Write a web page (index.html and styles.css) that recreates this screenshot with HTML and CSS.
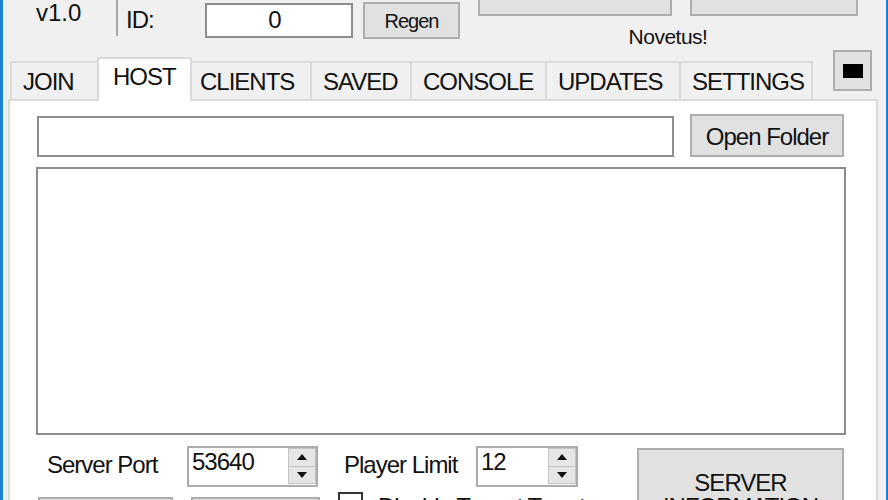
FILE: index.html
```html
<!DOCTYPE html>
<html>
<head>
<meta charset="utf-8">
<title>Novetus</title>
<link rel="stylesheet" href="styles.css">
</head>
<body>
<div class="window">
  <div class="header">
    <div class="ver">v1.0</div>
    <div class="sep"></div>
    <div class="id-label">ID:</div>
    <div class="idbox">0</div>
    <div class="btn regen">Regen</div>
    <div class="right-group">
      <div class="top-btns">
        <div class="btn tb1"></div>
        <div class="btn tb2"></div>
      </div>
      <div class="brand">Novetus!</div>
    </div>
  </div>

  <div class="tabbar">
    <div class="tb-lead"></div>
    <div class="tab t-join">JOIN</div>
    <div class="tab active t-host">HOST</div>
    <div class="tab t-clients">CLIENTS</div>
    <div class="tab t-saved">SAVED</div>
    <div class="tab t-console">CONSOLE</div>
    <div class="tab t-updates">UPDATES</div>
    <div class="tab t-settings">SETTINGS</div>
    <div class="tb-fill">
      <div class="btn sq"><span class="sq-mark"></span></div>
    </div>
  </div>

  <div class="panel">
    <div class="path-row">
      <div class="textbox path"></div>
      <div class="btn open">Open Folder</div>
    </div>
    <div class="listbox"></div>
    <div class="bottom">
      <div class="bottom-left">
        <div class="row-a">
          <div class="lbl sp">Server Port</div>
          <div class="num n1">
            <div class="num-val">53640</div>
            <div class="spin">
              <div class="spin-btn"><svg width="10" height="6" viewBox="0 0 10 6"><path d="M0 6 L5 0 L10 6 Z" fill="#111"/></svg></div>
              <div class="spin-btn"><svg width="10" height="6" viewBox="0 0 10 6"><path d="M0 0 L10 0 L5 6 Z" fill="#111"/></svg></div>
            </div>
          </div>
          <div class="lbl pl">Player Limit</div>
          <div class="num n2">
            <div class="num-val">12</div>
            <div class="spin">
              <div class="spin-btn"><svg width="10" height="6" viewBox="0 0 10 6"><path d="M0 6 L5 0 L10 6 Z" fill="#111"/></svg></div>
              <div class="spin-btn"><svg width="10" height="6" viewBox="0 0 10 6"><path d="M0 0 L10 0 L5 6 Z" fill="#111"/></svg></div>
            </div>
          </div>
        </div>
        <div class="row-b">
          <div class="btn b1"></div>
          <div class="btn b2"></div>
          <div class="chk"></div>
          <div class="lbl chk-lbl">Disable Teapot Turret</div>
        </div>
      </div>
      <div class="btn server"><span class="server-txt"><span class="line">SERVER</span><span class="line">INFORMATION</span></span></div>
    </div>
  </div>
</div>
</body>
</html>
```

FILE: styles.css
```css
html, body {
  margin: 0;
  padding: 0;
}
body {
  width: 888px;
  height: 500px;
  overflow: hidden;
  background: #f0f0f0;
  font-family: "Liberation Sans", Arial, sans-serif;
  color: #111;
}
.window {
  box-sizing: border-box;
  width: 888px;
  height: 500px;
  overflow: hidden;
  background: #f0f0f0;
  border-left: 3px solid #1a82d6;
  border-right: 2px solid #1a82d6;
  font-size: 24px;
  line-height: 28px;
  letter-spacing: -1px;
}
.btn {
  box-sizing: border-box;
  background: #e1e1e1;
  border: 2px solid #adadad;
  display: flex;
  align-items: center;
  justify-content: center;
  text-align: center;
}

/* header */
.header {
  display: flex;
  align-items: flex-start;
  height: 50px;
}
.ver {
  margin-left: 33px;
  margin-top: -1px;
  width: 80px;
  letter-spacing: 0;
}
.sep {
  width: 2px;
  height: 36px;
  background: #a8a8a8;
}
.id-label {
  margin-left: 8px;
  width: 79px;
  margin-top: 6px;
}
.idbox {
  box-sizing: border-box;
  margin-top: 3px;
  width: 148px;
  height: 35px;
  border: 2px solid #8d8d8d;
  background: #fff;
  text-align: center;
  padding: 1px 9px 0 0;
}
.regen {
  margin-left: 10px;
  margin-top: 2px;
  width: 97px;
  height: 37px;
  font-size: 20px;
  line-height: 24px;
  padding-top: 1px;
}
.right-group {
  margin-left: 18px;
  display: flex;
  flex-direction: column;
  align-items: center;
}
.top-btns {
  display: flex;
  gap: 18px;
  margin-top: -30px;
}
.tb1 { width: 194px; height: 46px; }
.tb2 { width: 168px; height: 46px; }
.brand {
  font-size: 21px;
  line-height: 24px;
  letter-spacing: -0.5px;
  margin-top: 9px;
}

/* tabs */
.tabbar {
  display: flex;
  margin-left: 5px;
  width: 870px;
  height: 51px;
}
.tb-lead {
  width: 2px;
  border-bottom: 2px solid #dadada;
}
.tab {
  box-sizing: border-box;
  align-self: flex-end;
  height: 40px;
  background: #f0f0f0;
  border-top: 2px solid #dadada;
  border-left: 2px solid #dadada;
  border-bottom: 2px solid #dadada;
  padding: 5px 0 0 11px;
  white-space: nowrap;
}
.tab.active {
  height: 44px;
  background: #fff;
  border-bottom: none;
  border-right: 2px solid #dadada;
  padding: 4px 0 0 14px;
}
.t-join { width: 87px; }
.t-host { width: 95px; }
.t-clients { width: 118px; border-left: none; padding-left: 8px; }
.t-saved { width: 100px; }
.t-console { width: 135px; }
.t-updates { width: 134px; }
.t-settings { width: 134px; border-right: 2px solid #dadada; }
.tb-fill {
  flex: 1;
  display: flex;
  justify-content: flex-end;
  align-items: flex-start;
  border-bottom: 2px solid #dadada;
}
.sq {
  width: 39px;
  height: 41px;
  margin-right: 6px;
}
.sq-mark {
  display: block;
  width: 20px;
  height: 14px;
  background: #000;
}

/* panel */
.panel {
  box-sizing: border-box;
  margin-left: 5px;
  width: 870px;
  height: 420px;
  background: #fff;
  border: 2px solid #dadada;
  border-top: none;
  padding: 13px 0 0 26px;
}
.path-row {
  display: flex;
  align-items: flex-start;
}
.textbox {
  box-sizing: border-box;
  background: #fff;
  border: 2px solid #8d8d8d;
}
.path {
  margin-left: 1px;
  margin-top: 2px;
  width: 637px;
  height: 41px;
}
.open {
  margin-left: 16px;
  width: 154px;
  height: 43px;
  padding-top: 2px;
}
.listbox {
  box-sizing: border-box;
  margin-top: 10px;
  width: 810px;
  height: 268px;
  border: 2px solid #8d8d8d;
  background: #fff;
}
.bottom {
  display: flex;
  margin-top: 11px;
}
.bottom-left {
  width: 601px;
}
.row-a {
  display: flex;
  height: 41px;
}
.lbl {
  padding-top: 5px;
  white-space: nowrap;
}
.sp { margin-left: 11px; width: 140px; }
.pl { margin-left: 26px; width: 132px; }
.num {
  box-sizing: border-box;
  display: flex;
  height: 41px;
  background: #fff;
  border: 2px solid #acacac;
}
.n1 { width: 131px; }
.n2 { width: 102px; }
.num-val {
  flex: 1;
  padding: 0 0 0 3px;
}
.spin {
  display: flex;
  flex-direction: column;
  width: 28px;
  margin-bottom: 1px;
}
.spin-btn {
  flex: 1;
  display: flex;
  align-items: center;
  justify-content: center;
  background: #e6e6e6;
  border: 1px solid #c4c4c4;
}
.spin-btn + .spin-btn {
  border-top: none;
}
.row-b {
  display: flex;
  align-items: flex-start;
  margin-top: 5px;
}
.b1 {
  margin-left: 2px;
  margin-top: 5px;
  width: 135px;
  height: 40px;
}
.b2 {
  margin-left: 18px;
  margin-top: 5px;
  width: 129px;
  height: 40px;
}
.chk {
  box-sizing: border-box;
  margin-left: 18px;
  width: 25px;
  height: 25px;
  border: 2px solid #333;
  background: #fff;
}
.chk-lbl {
  margin-left: 15px;
  margin-top: 1px;
  padding-top: 0;
}
.server {
  margin-top: 2px;
  width: 207px;
  height: 93px;
}
.server-txt {
  display: flex;
  flex-direction: column;
  align-items: center;
}
.server-txt .line {
  display: block;
  line-height: 26px;
}
.server-txt .line + .line {
  margin-top: -2px;
}
```
